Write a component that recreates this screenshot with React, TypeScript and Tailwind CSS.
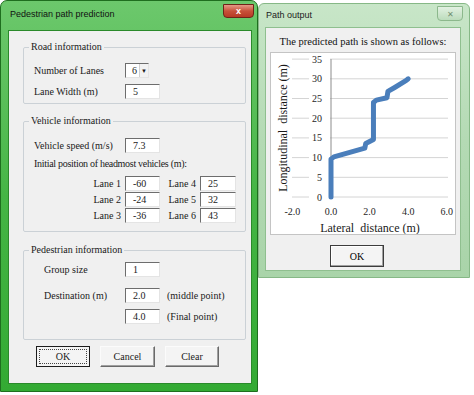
import React from "react";

const serif = { fontFamily: '"Liberation Serif", "Times New Roman", serif' };

function Box({ v, w = "w-[35px]" }: { v: string; w?: string }) {
  return (
    <div
      className={`${w} h-[15px] shrink-0 bg-white border border-t-[#6d6d6d] border-l-[#6d6d6d] border-r-[#e4e4e4] border-b-[#e4e4e4] pl-[7px] text-[10px] leading-[14px] text-[#1a1a1a]`}
    >
      {v}
    </div>
  );
}

function Combo({ v }: { v: string }) {
  return (
    <div className="w-[24px] h-[15px] flex bg-white border border-t-[#6d6d6d] border-l-[#6d6d6d] border-r-[#e4e4e4] border-b-[#e4e4e4] text-[10px] leading-[13px]">
      <span className="pl-[6px] flex-1">{v}</span>
      <span className="w-[9px] flex items-center justify-center bg-[#f2f2f2] border-l border-[#d0d0d0] text-[6px] leading-none">
        ▼
      </span>
    </div>
  );
}

function Btn({ label, w, focus }: { label: string; w: string; focus?: boolean }) {
  if (focus) {
    return (
      <div className={`${w} h-[21px] border border-[#1c1c1c] bg-[#f4f4f4] p-[2px]`}>
        <div className="h-full border border-dotted border-[#444] flex items-center justify-center text-[10px]">
          {label}
        </div>
      </div>
    );
  }
  return (
    <div
      className={`${w} h-[21px] bg-[#f4f4f4] border border-t-[#fbfbfb] border-l-[#fbfbfb] border-r-[#6a6a6a] border-b-[#6a6a6a] shadow-[inset_-1px_-1px_0_#a0a0a0] flex items-center justify-center text-[10px]`}
    >
      {label}
    </div>
  );
}

function Group({ title, className, children }: { title: string; className?: string; children: React.ReactNode }) {
  return (
    <fieldset className={`ml-[14px] w-[223px] border border-[#cbd1d6] rounded-[2px] ${className ?? ""}`}>
      <legend className="ml-[5px] px-[2px] h-[14px] text-[10px] leading-[14px] text-[#1a1a1a]">{title}</legend>
      {children}
    </fieldset>
  );
}

const xs = (u: number) => 61 + 19.3 * u;
const ys = (v: number) => 145 - 3.94 * v;

const path: [number, number][] = [
  [0, 0],
  [0, 9.6],
  [0.15, 10.2],
  [1.75, 12.4],
  [1.8, 13.6],
  [2.2, 14.6],
  [2.2, 24],
  [2.35, 24.6],
  [2.9, 25.2],
  [2.95, 26.8],
  [3.3, 27.8],
  [3.9, 29.6],
  [4.0, 30],
];

function Chart() {
  const ticks = [0, 5, 10, 15, 20, 25, 30, 35];
  const xt = [-2, 0, 2, 4, 6];
  return (
    <svg width="184" height="181" viewBox="1 1 184 181" style={serif}>
      {ticks.map((t) => (
        <line key={t} x1={22} x2={178} y1={ys(t)} y2={ys(t)} stroke="#d4d4d4" strokeWidth={1} />
      ))}
      <rect x={39} y={2} width={21} height={150} fill="white" />
      <line x1={61} x2={61} y1={ys(35)} y2={ys(0)} stroke="#8c8c8c" strokeWidth={1} />
      {ticks.map((t) => (
        <text key={t} x={52} y={ys(t) + 3.5} fontSize={10} textAnchor="end" fill="#262626">
          {t}
        </text>
      ))}
      {xt.map((t) => (
        <text key={t} x={xs(t)} y={162.5} fontSize={10} textAnchor="middle" fill="#262626">
          {t.toFixed(1)}
        </text>
      ))}
      <polyline
        points={path.map(([u, v]) => `${xs(u)},${ys(v)}`).join(" ")}
        fill="none"
        stroke="#4a7ebb"
        strokeWidth={5}
        strokeLinejoin="round"
        strokeLinecap="round"
      />
      <text x={100} y={180} fontSize={12} textAnchor="middle" fill="#1a1a1a" xmlSpace="preserve">
        Lateral  distance (m)
      </text>
      <text transform="translate(17,76) rotate(-90)" fontSize={12} textAnchor="middle" fill="#1a1a1a" xmlSpace="preserve">
        Longitudinal  distance (m)
      </text>
    </svg>
  );
}

export default function App() {
  return (
    <div className="w-[474px] h-[395px] bg-white flex items-start overflow-hidden">
      {/* main dialog */}
      <div className="w-[258px] h-[392px] shrink-0 flex flex-col rounded-t-[7px] border border-[#1f6e1f] bg-gradient-to-b from-[#6cc86c] via-[#45b545] to-[#33aa33]">
        <div className="h-[29px] flex items-start justify-between pl-[9px] pr-[3px]">
          <span className="self-center text-[9px] text-[#111] mt-[-1px]" style={{ fontFamily: '"Liberation Sans", Arial, sans-serif' }}>
            Pedestrian path prediction
          </span>
          <div className="mt-[3px] w-[31px] h-[14px] rounded-b-[4px] border border-[#6e2418] bg-gradient-to-b from-[#e49a86] via-[#c8513a] to-[#b83a24] flex items-center justify-center text-white text-[9px] font-bold leading-none" style={{ fontFamily: '"Liberation Sans", Arial, sans-serif' }}>
            x
          </div>
        </div>
        <div className="ml-[7px] w-[244px] flex-1 mb-[7px] bg-[#f0f0f0] border border-[#2a8a2a] text-[#1a1a1a] text-[10px] pt-[9px]" style={serif}>
          <Group title="Road information">
            <div className="pl-[10px] pt-[9px] pb-[4px] flex flex-col gap-[6px]">
              <div className="flex items-center h-[15px]">
                <span className="w-[91px]">Number of Lanes</span>
                <Combo v="6" />
              </div>
              <div className="flex items-center h-[15px]">
                <span className="w-[91px]">Lane Width (m)</span>
                <Box v="5" />
              </div>
            </div>
          </Group>

          <Group title="Vehicle information" className="mt-[10px]">
            <div className="pl-[10px] pt-[10px] pb-[8px] flex flex-col">
              <div className="flex items-center h-[15px]">
                <span className="w-[91px]">Vehicle speed (m/s)</span>
                <Box v="7.3" />
              </div>
              <div className="mt-[4px] h-[14px] leading-[14px] tracking-[-0.3px]">Initial position of headmost vehicles (m):</div>
              <div className="mt-[5px] flex flex-col gap-[1px]">
                {[
                  ["Lane 1", "-60", "Lane 4", "25"],
                  ["Lane 2", "-24", "Lane 5", "32"],
                  ["Lane 3", "-36", "Lane 6", "43"],
                ].map(([a, av, b, bv]) => (
                  <div key={a} className="flex items-center h-[15px]">
                    <span className="w-[87px] text-right mr-[4px]">{a}</span>
                    <Box v={av} />
                    <span className="w-[36px] text-right mr-[4px]">{b}</span>
                    <Box v={bv} w="w-[36px]" />
                  </div>
                ))}
              </div>
            </div>
          </Group>

          <Group title="Pedestrian information" className="mt-[11px]">
            <div className="pl-[20px] pt-[5px] pb-[15px] flex flex-col">
              <div className="flex items-center h-[15px]">
                <span className="w-[81px]">Group size</span>
                <Box v="1" />
              </div>
              <div className="mt-[11px] flex items-center h-[15px]">
                <span className="w-[81px]">Destination (m)</span>
                <Box v="2.0" />
                <span className="ml-[7px]">(middle point)</span>
              </div>
              <div className="mt-[6px] flex items-center h-[15px]">
                <span className="w-[81px]" />
                <Box v="4.0" />
                <span className="ml-[7px]">(Final point)</span>
              </div>
            </div>
          </Group>

          <div className="mt-[6px] pl-[27px] flex gap-[10px]">
            <Btn label="OK" w="w-[54px]" focus />
            <Btn label="Cancel" w="w-[55px]" />
            <Btn label="Clear" w="w-[54px]" />
          </div>
        </div>
      </div>

      {/* output window */}
      <div className="mt-[3px] w-[212px] h-[275px] shrink-0 flex flex-col rounded-t-[6px] border border-[#86b886] bg-gradient-to-b from-[#c8e6c8] via-[#b4dab4] to-[#a9d4a9]">
        <div className="h-[23px] flex items-start justify-between pl-[7px] pr-[6px]">
          <span className="self-center text-[9px] text-[#222]" style={{ fontFamily: '"Liberation Sans", Arial, sans-serif' }}>
            Path output
          </span>
          <div className="mt-[2px] w-[26px] h-[15px] rounded-b-[4px] border border-[#8cb88c] bg-gradient-to-b from-[#e2f1e2] to-[#bcdcbc] flex items-center justify-center text-[#6f8f6f] text-[8px] leading-none">
            ✕
          </div>
        </div>
        <div className="ml-[6px] w-[196px] flex-1 mb-[6px] bg-[#f0f0f0] border border-[#8fbf8f] flex flex-col" style={serif}>
          <div className="mt-[7px] h-[14px] leading-[14px] text-center text-[10.5px] text-[#111]">
            The predicted path is shown as follows:
          </div>
          <div className="mt-[3px] ml-[4px] w-[186px] h-[183px] bg-white border border-[#c4c4c4]">
            <Chart />
          </div>
          <div className="mt-[10px] ml-[64px]">
            <div className="w-[54px] h-[22px] bg-[#f4f4f4] border border-[#3c3c3c] shadow-[inset_-1px_-1px_0_#a0a0a0,inset_1px_1px_0_#ffffff] flex items-center justify-center text-[10px]">
              OK
            </div>
          </div>
        </div>
      </div>
    </div>
  );
}
